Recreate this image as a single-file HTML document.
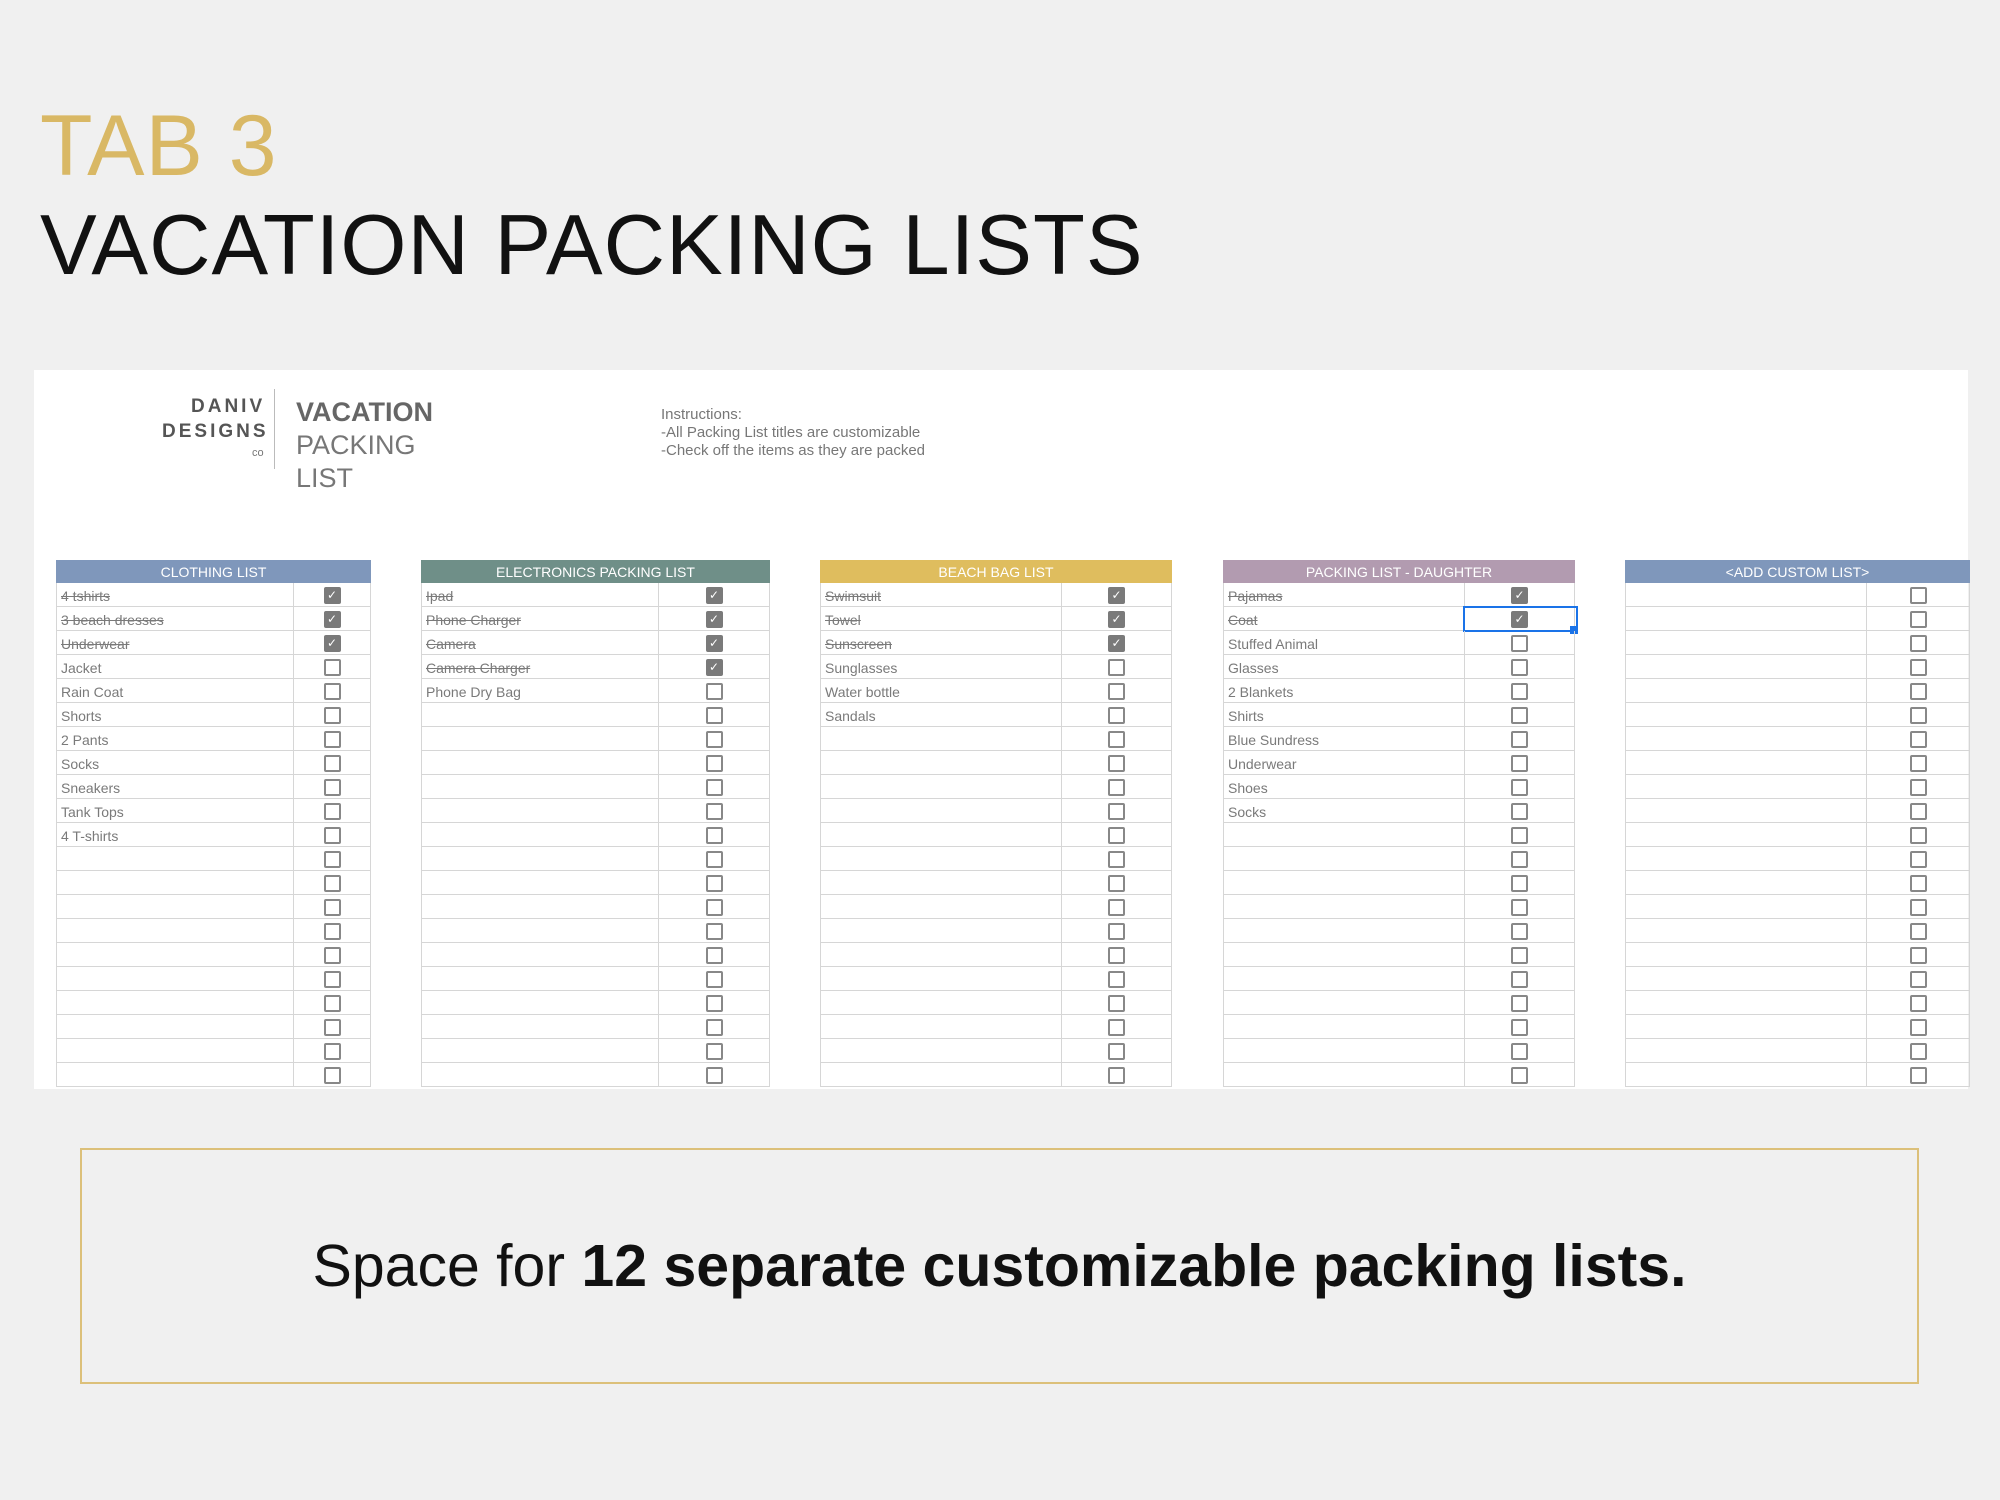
<!DOCTYPE html>
<html><head><meta charset="utf-8">
<style>
body{margin:0;width:2000px;height:1500px;background:#f0f0f0;font-family:"Liberation Sans",sans-serif;position:relative;overflow:hidden}
.t1{position:absolute;left:40px;top:97px;font-size:86px;color:#d9b865;letter-spacing:1px}
.t2{position:absolute;left:40px;top:197px;font-size:85px;color:#111;letter-spacing:1px}
.sheet{position:absolute;left:34px;top:370px;width:1934px;height:719px;background:#fff}
.a{position:absolute;white-space:nowrap}
.list{position:absolute;top:190px}
.hdr{height:23px;color:#fff;font-size:14px;text-align:center;line-height:24px}
.row{height:23px;border-bottom:1px solid #d6d6d6;border-left:1px solid #d6d6d6;border-right:1px solid #d6d6d6;position:relative;font-size:14px;color:#7a7a7a;line-height:26px}
.row span{padding-left:4px}
.row .d{position:absolute;top:0;bottom:0;border-left:1px solid #d6d6d6}
.cb{position:absolute;top:4px;width:13px;height:13px;border:2px solid #888;border-radius:2px;box-sizing:content-box}
.cb.c{background:#7a7a7a;border-color:#7a7a7a;color:#fff;font-size:12px;line-height:13px;text-align:center}
.s{text-decoration:line-through}
.box{position:absolute;left:80px;top:1148px;width:1835px;height:232px;border:2px solid #dcc07a}
.box p{margin:0;text-align:center;font-size:59px;line-height:232px;color:#111}
</style></head><body>
<div class="t1">TAB 3</div>
<div class="t2">VACATION PACKING LISTS</div>
<div class="sheet" id="sh">
  <div class="a" style="left:157px;top:26px;font-size:19px;color:#555;letter-spacing:3px;font-weight:bold">DANIV</div>
  <div class="a" style="left:128px;top:51px;font-size:19px;color:#555;letter-spacing:3px;font-weight:bold">DESIGNS</div>
  <div class="a" style="left:218px;top:77px;font-size:11px;color:#777">co</div>
  <div class="a" style="left:240px;top:19px;width:1px;height:80px;background:#bbb"></div>
  <div class="a" style="left:262px;top:27px;font-size:27px;color:#666;font-weight:bold">VACATION</div>
  <div class="a" style="left:262px;top:60px;font-size:27px;color:#777">PACKING</div>
  <div class="a" style="left:262px;top:93px;font-size:27px;color:#777">LIST</div>
  <div class="a" style="left:627px;top:36px;font-size:15px;color:#777;line-height:18px">Instructions:<br>-All Packing List titles are customizable<br>-Check off the items as they are packed</div>
</div>
<div class="box"><p>Space for <b>12 separate customizable packing lists.</b></p></div>
<script>
var L=[
 {x:22,w:315,d:236,c:"#7f97bb",t:"CLOTHING LIST",i:[["4 tshirts",1],["3 beach dresses",1],["Underwear",1],["Jacket"],["Rain Coat"],["Shorts"],["2 Pants"],["Socks"],["Sneakers"],["Tank Tops"],["4 T-shirts"]]},
 {x:387,w:349,d:236,c:"#6f8f88",t:"ELECTRONICS PACKING LIST",i:[["Ipad",1],["Phone Charger",1],["Camera",1],["Camera Charger",1],["Phone Dry Bag"]]},
 {x:786,w:352,d:240,c:"#dfbd5e",t:"BEACH BAG LIST",i:[["Swimsuit",1],["Towel",1],["Sunscreen",1],["Sunglasses"],["Water bottle"],["Sandals"]]},
 {x:1189,w:352,d:240,c:"#b29bb0",t:"PACKING LIST - DAUGHTER",i:[["Pajamas",1],["Coat",1],["Stuffed Animal"],["Glasses"],["2 Blankets"],["Shirts"],["Blue Sundress"],["Underwear"],["Shoes"],["Socks"]]},
 {x:1591,w:345,d:240,c:"#7f97bb",t:"&lt;ADD CUSTOM LIST&gt;",i:[]}
];
var h="";
L.forEach(function(l,k){
 h+='<div class="list" style="left:'+l.x+'px;width:'+l.w+'px"><div class="hdr" style="background:'+l.c+'">'+l.t+'</div>';
 var cc=l.d+(l.w-l.d)/2-9;
 for(var r=0;r<21;r++){
  var it=l.i[r]||["",0];
  h+='<div class="row"><span class="'+(it[1]?"s":"")+'">'+it[0]+'</span><div class="d" style="left:'+l.d+'px"></div><div class="cb'+(it[1]?" c":"")+'" style="left:'+cc+'px">'+(it[1]?"✓":"")+'</div>'+
   ((k==3&&r==1)?'<div style="position:absolute;left:'+(l.d-1)+'px;top:-1px;width:'+(l.w-l.d-1)+'px;height:22px;border:2px solid #1a73e8"></div><div style="position:absolute;right:-4px;bottom:-4px;width:8px;height:8px;background:#1a73e8"></div>':'')+'</div>';
 }
 h+='</div>';
});
document.getElementById("sh").insertAdjacentHTML("beforeend",h);
</script>
</body></html>
